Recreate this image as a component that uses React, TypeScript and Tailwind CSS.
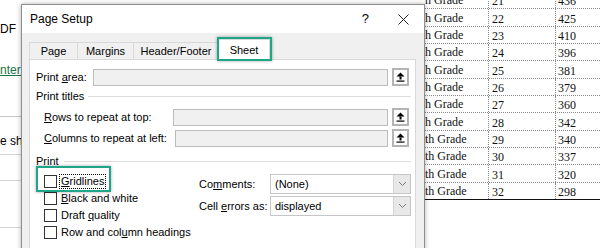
const rows = [
  { t: "h Grade", n: "21", v: "436" },
  { t: "h Grade", n: "22", v: "425" },
  { t: "h Grade", n: "23", v: "410" },
  { t: "h Grade", n: "24", v: "396" },
  { t: "h Grade", n: "25", v: "381" },
  { t: "h Grade", n: "26", v: "379" },
  { t: "h Grade", n: "27", v: "360" },
  { t: "h Grade", n: "28", v: "342" },
  { t: "th Grade", n: "29", v: "340" },
  { t: "th Grade", n: "30", v: "337" },
  { t: "th Grade", n: "31", v: "320" },
  { t: "th Grade", n: "32", v: "298" },
];

function ArrowButton() {
  return (
    <div className="flex h-[18px] w-[17px] shrink-0 items-center justify-center border-2 border-[#b4b4b4] bg-white">
      <svg width="9" height="10" viewBox="0 0 9 10">
        <polygon points="4.5,0.5 0.5,4.5 8.5,4.5" fill="#000" />
        <rect x="3.5" y="4.5" width="2" height="3" fill="#000" />
        <rect x="0.5" y="8.5" width="8" height="1.2" fill="#000" />
      </svg>
    </div>
  );
}

function Field() {
  return <div className="h-[17px] flex-1 border border-[#bcbcbc] bg-[#f0f0f0]" />;
}

function Check({ children }: { children: React.ReactNode }) {
  return (
    <div className="flex h-[17px] items-center">
      <div className="h-[13px] w-[13px] shrink-0 border border-[#333] bg-white" />
      <span className="ml-[3px] px-[1px]">{children}</span>
    </div>
  );
}

function Dropdown({ value }: { value: string }) {
  return (
    <div className="flex h-[20px] w-[141px] items-center border border-[#c6c6c6] bg-white">
      <span className="flex-1 pl-[4px]">{value}</span>
      <div className="flex h-full w-[17px] items-center justify-center border-l border-[#d4d4d4] bg-[#e8e8e8]">
        <svg width="9" height="6" viewBox="0 0 9 6">
          <polyline points="1,1 4.5,4.5 8,1" fill="none" stroke="#7a7a7a" strokeWidth="1" />
        </svg>
      </div>
    </div>
  );
}

function Dialog() {
  return (
    <div className="relative z-10 mt-[4px] flex h-[270px] w-[404px] shrink-0 flex-col self-start border-l border-r border-t border-[#8f8f8f] bg-[#f0f0f0] shadow-[0_0_5px_rgba(0,0,0,0.3)]">
      <div className="flex h-[28px] items-center bg-white">
        <span className="pl-[8px] text-[12px]">Page Setup</span>
        <span className="ml-auto mr-[29px] text-[13px]">?</span>
        <svg width="11" height="11" viewBox="0 0 11 11" className="mr-[15px]">
          <path d="M0.5 0.5 L10.5 10.5 M10.5 0.5 L0.5 10.5" stroke="#222" strokeWidth="1" />
        </svg>
      </div>
      <div className="flex h-[26px] items-end pl-[7px]">
        <div className="flex h-[17px] w-[48px] items-center justify-center border-l border-t border-[#d9d9d9]">Page</div>
        <div className="flex h-[17px] w-[56px] items-center justify-center border-l border-t border-[#d9d9d9]">Margins</div>
        <div className="flex h-[17px] w-[85px] items-center justify-center border-l border-t border-[#d9d9d9]">Header/Footer</div>
        <div className="relative -mb-[1px] flex h-[21px] w-[52px] items-center justify-center border-l border-r border-t border-[#d9d9d9] bg-white">Sheet</div>
      </div>
      <div className="ml-[7px] mr-[8px] flex-1 border border-[#d9d9d9] bg-white pl-[6px] pr-[4px]">
        <div className="mr-[2px] mt-[8px] flex h-[18px] items-center">
          <span className="w-[57px] shrink-0">Print <span className="underline">a</span>rea:</span>
          <Field />
          <div className="w-[4px]" />
          <ArrowButton />
        </div>
        <div className="mt-[1px] flex h-[18px] items-center">
          <span>Print titles</span>
          <div className="ml-[4px] h-px flex-1 bg-[#dcdcdc]" />
        </div>
        <div className="mr-[2px] mt-[3px] flex h-[18px] items-center">
          <span className="w-[137px] shrink-0 pl-[8px]"><span className="underline">R</span>ows to repeat at top:</span>
          <Field />
          <div className="w-[4px]" />
          <ArrowButton />
        </div>
        <div className="mr-[2px] mt-[3px] flex h-[18px] items-center">
          <span className="w-[139px] shrink-0 pl-[8px]"><span className="underline">C</span>olumns to repeat at left:</span>
          <Field />
          <div className="w-[4px]" />
          <ArrowButton />
        </div>
        <div className="mt-[5px] flex h-[18px] items-center">
          <span>Print</span>
          <div className="ml-[5px] h-px flex-1 bg-[#dcdcdc]" />
        </div>
        <div className="mt-[3px] flex">
          <div className="w-[163px] pl-[8px]">
            <div className="flex h-[17px] items-center">
              <div className="h-[13px] w-[13px] shrink-0 border border-[#333] bg-white" />
              <span className="ml-[2px] border border-dotted border-[#000] px-[1px] leading-[13px]"><span className="underline">G</span>ridlines</span>
            </div>
            <Check><span className="underline">B</span>lack and white</Check>
            <Check>Draft <span className="underline">q</span>uality</Check>
            <Check>Row and col<span className="underline">u</span>mn headings</Check>
          </div>
          <div className="mt-[1px] flex flex-col gap-[2px]">
            <div className="flex items-center">
              <span className="w-[71px]">Co<span className="underline">m</span>ments:</span>
              <Dropdown value="(None)" />
            </div>
            <div className="flex items-center">
              <span className="w-[71px]">Cell <span className="underline">e</span>rrors as:</span>
              <Dropdown value="displayed" />
            </div>
          </div>
        </div>
      </div>
    </div>
  );
}

function LeftStrip() {
  return (
    <div className="flex w-[21px] shrink-0 flex-col overflow-hidden whitespace-nowrap text-[12px]">
      <div className="mt-[21px] h-[16px] leading-[16px]">DF</div>
      <div className="mt-[25px] h-[16px] leading-[16px] text-[#217346] underline">nter Page</div>
      <div className="mt-[38px] h-px bg-[#c8c8c8]" />
      <div className="mt-[16px] h-[16px] leading-[16px]">e sheet</div>
      <div className="mt-[5px] h-px bg-[#d4d4d4]" />
      <div className="mt-[25px] h-px bg-[#d4d4d4]" />
      <div className="mt-[46px] h-px bg-[#d4d4d4]" />
    </div>
  );
}

function Sheet() {
  return (
    <div className="flex flex-1 flex-col overflow-hidden whitespace-nowrap font-['Liberation_Serif',serif] text-[12px] text-[#111]">
      <div className="-mt-[8px]">
        {rows.map((r, i) => (
          <div
            key={r.n}
            className={`flex h-[17.33px] border-b ${i === rows.length - 1 ? "border-solid border-[#111]" : "border-dotted border-[#8a8a8a]"}`}
          >
            <div className="flex w-[63px] items-end pb-[1px] leading-[14px]">{r.t}</div>
            <div className="flex w-[67px] items-end border-l border-dotted border-[#8a8a8a] pl-[3px] leading-[14px]">{r.n}</div>
            <div className="flex flex-1 items-end border-l border-dotted border-[#8a8a8a] pl-[2px] leading-[14px]">{r.v}</div>
          </div>
        ))}
      </div>
    </div>
  );
}

export default function App() {
  return (
    <div className="relative flex h-[248px] w-[600px] overflow-hidden bg-white font-['Liberation_Sans',Arial,sans-serif] text-[11px] text-black">
      <LeftStrip />
      <Dialog />
      <Sheet />
      <div className="pointer-events-none absolute left-[217px] top-[37px] z-20 h-[24px] w-[55px] border-2 border-[#1fa587] shadow-[0_0_3px_rgba(0,0,0,0.35)]" />
      <div className="pointer-events-none absolute left-[36px] top-[166px] z-20 h-[26px] w-[75px] border-2 border-[#1fa587] shadow-[0_0_3px_rgba(0,0,0,0.35)]" />
    </div>
  );
}
